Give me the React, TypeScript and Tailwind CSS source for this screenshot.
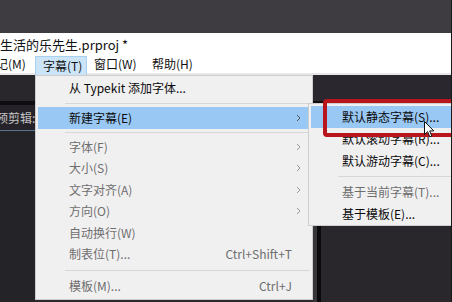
import React from "react"

type Entry =
  | { sep: true; h: string }
  | { label: string; h: string; keys?: string; arrow?: boolean; off?: boolean; on?: boolean }

const mainItems: Entry[] = [
  { label: "从 Typekit 添加字体...", h: "h-[22px]" },
  { sep: true, h: "h-[8px]" },
  { label: "新建字幕(E)", h: "h-[22px]", arrow: true, on: true },
  { sep: true, h: "h-[7px]" },
  { label: "字体(F)", h: "h-[21.5px]", arrow: true, off: true },
  { label: "大小(S)", h: "h-[21.5px]", arrow: true, off: true },
  { label: "文字对齐(A)", h: "h-[21.5px]", arrow: true, off: true },
  { label: "方向(O)", h: "h-[21.5px]", arrow: true, off: true },
  { label: "自动换行(W)", h: "h-[21.5px]", off: true },
  { label: "制表位(T)...", h: "h-[21.5px]", keys: "Ctrl+Shift+T", off: true },
  { sep: true, h: "h-[10px]" },
  { label: "模板(M)...", h: "h-[21.5px]", keys: "Ctrl+J", off: true },
]

const subItems: Entry[] = [
  { label: "默认静态字幕(S)...", h: "h-[22px]", on: true },
  { label: "默认滚动字幕(R)...", h: "h-[22px]" },
  { label: "默认游动字幕(C)...", h: "h-[22px]" },
  { sep: true, h: "h-[9px]" },
  { label: "基于当前字幕(T)...", h: "h-[22px]", off: true },
  { label: "基于模板(E)...", h: "h-[22px]" },
]

function Chevron({ dark }: { dark?: boolean }) {
  return (
    <svg width="5" height="8" viewBox="0 0 5 8" className="shrink-0">
      <path d="M1 1 L4 4 L1 7" fill="none" stroke={dark ? "#555" : "#9a9a9a"} strokeWidth="1" />
    </svg>
  )
}

function MenuRows({ items }: { items: Entry[] }) {
  return (
    <>
      {items.map((it, i) =>
        "sep" in it ? (
          <div key={i} className={`${it.h} flex items-center pl-[27px]`}>
            <div className="h-px w-full bg-[#d7d7d7]" />
          </div>
        ) : (
          <div
            key={i}
            className={`${it.h} flex items-center pl-[31px] pr-[9px] whitespace-nowrap ${
              it.on ? "bg-[#9ac8f4]" : ""
            } ${it.off ? "text-[#6e6e6e]" : "text-[#0a0a0a]"}`}
          >
            <span>{it.label}</span>
            {it.keys && <span className="ml-auto mr-[9px]">{it.keys}</span>}
            {it.arrow && (
              <span className="ml-auto">
                <Chevron dark={it.on} />
              </span>
            )}
          </div>
        )
      )}
    </>
  )
}

export default function App() {
  return (
    <div
      className="relative w-[452px] h-[302px] overflow-hidden flex flex-col bg-[#2a282d] text-[12px] leading-none border-r border-[#1a1a1a]"
      style={{ fontFamily: "'Noto Sans CJK SC', 'Noto Sans', sans-serif" }}
    >
      {/* app title strip */}
      <div className="h-[33px] shrink-0 bg-[#3e3c40]" />

      {/* window title + menubar */}
      <div className="shrink-0 bg-white">
        <div className="h-[22px] flex items-center text-[13px] text-[#111] whitespace-nowrap">
          生活的乐先生.prproj *
        </div>
        <div className="relative z-10 h-[18px] flex items-start text-[#111] whitespace-nowrap">
          <div className="h-[18px] flex items-center ml-[-16px] w-[51px]">标记(M)</div>
          <div className="h-[19px] mt-[1px] flex items-center px-[7px] w-[52px] bg-[#cce4f7] border border-[#a8d0f0] border-b-0">
            字幕(T)
          </div>
          <div className="h-[18px] flex items-center ml-[7px] w-[58px]">窗口(W)</div>
          <div className="h-[18px] flex items-center">帮助(H)</div>
        </div>
      </div>
      <div className="h-[2px] shrink-0 bg-[#e7e7e7]" />

      {/* workspace below */}
      <div className="flex-1 flex">
        <div className="w-[35px] flex flex-col overflow-hidden">
          <div className="h-[26px] bg-[#29272c]" />
          <div className="h-[4px] bg-[#0e0d10]" />
          <div className="h-[25px] bg-[#252329] flex items-center whitespace-nowrap text-[#c4c4c4] pt-[1px]">
            <span className="ml-[-4px]">预剪辑:</span>
          </div>
          <div className="h-px bg-[#56728e]" />
          <div className="flex-1 bg-[#242328]" />
        </div>
        <div className="w-[278px] bg-[#2a282d]" />
        <div className="flex-1 flex flex-col">
          <div className="h-[26px] bg-[#2a282e]" />
          <div className="h-[4px] bg-[#0e0d10]" />
          <div className="flex-1 flex">
            <div className="w-[4px] bg-[#38363b]" />
            <div className="w-[4px] bg-[#0b0b0d]" />
            <div className="flex-1 bg-[#29272c]" />
          </div>
        </div>
      </div>

      {/* dropdown */}
      <div className="absolute left-[35px] top-[75px] w-[278px] bg-[#f1f0f1] border border-[#cdcdcd] px-[2px] pt-[1px] pb-[2px]">
        <MenuRows items={mainItems} />
      </div>

      {/* submenu */}
      <div className="absolute left-[308px] top-[103px] w-[160px] bg-[#f1f0f1] border border-[#cdcdcd] px-[2px] pt-[2px]">
        <MenuRows items={subItems} />
      </div>

      {/* red highlight box */}
      <div className="absolute left-[323px] top-[99px] w-[140px] h-[38px] border-[4px] border-[#b8151c] rounded-[4px]" />

      {/* mouse cursor */}
      <svg className="absolute left-[424px] top-[121px]" width="11" height="17" viewBox="0 0 11 17">
        <path
          d="M0.5 0.5 L0.5 13.5 L3.6 10.6 L5.8 15.8 L7.8 15 L5.7 9.9 L9.8 9.9 Z"
          fill="#fff"
          stroke="#111"
          strokeWidth="1"
          strokeLinejoin="round"
        />
      </svg>
    </div>
  )
}
